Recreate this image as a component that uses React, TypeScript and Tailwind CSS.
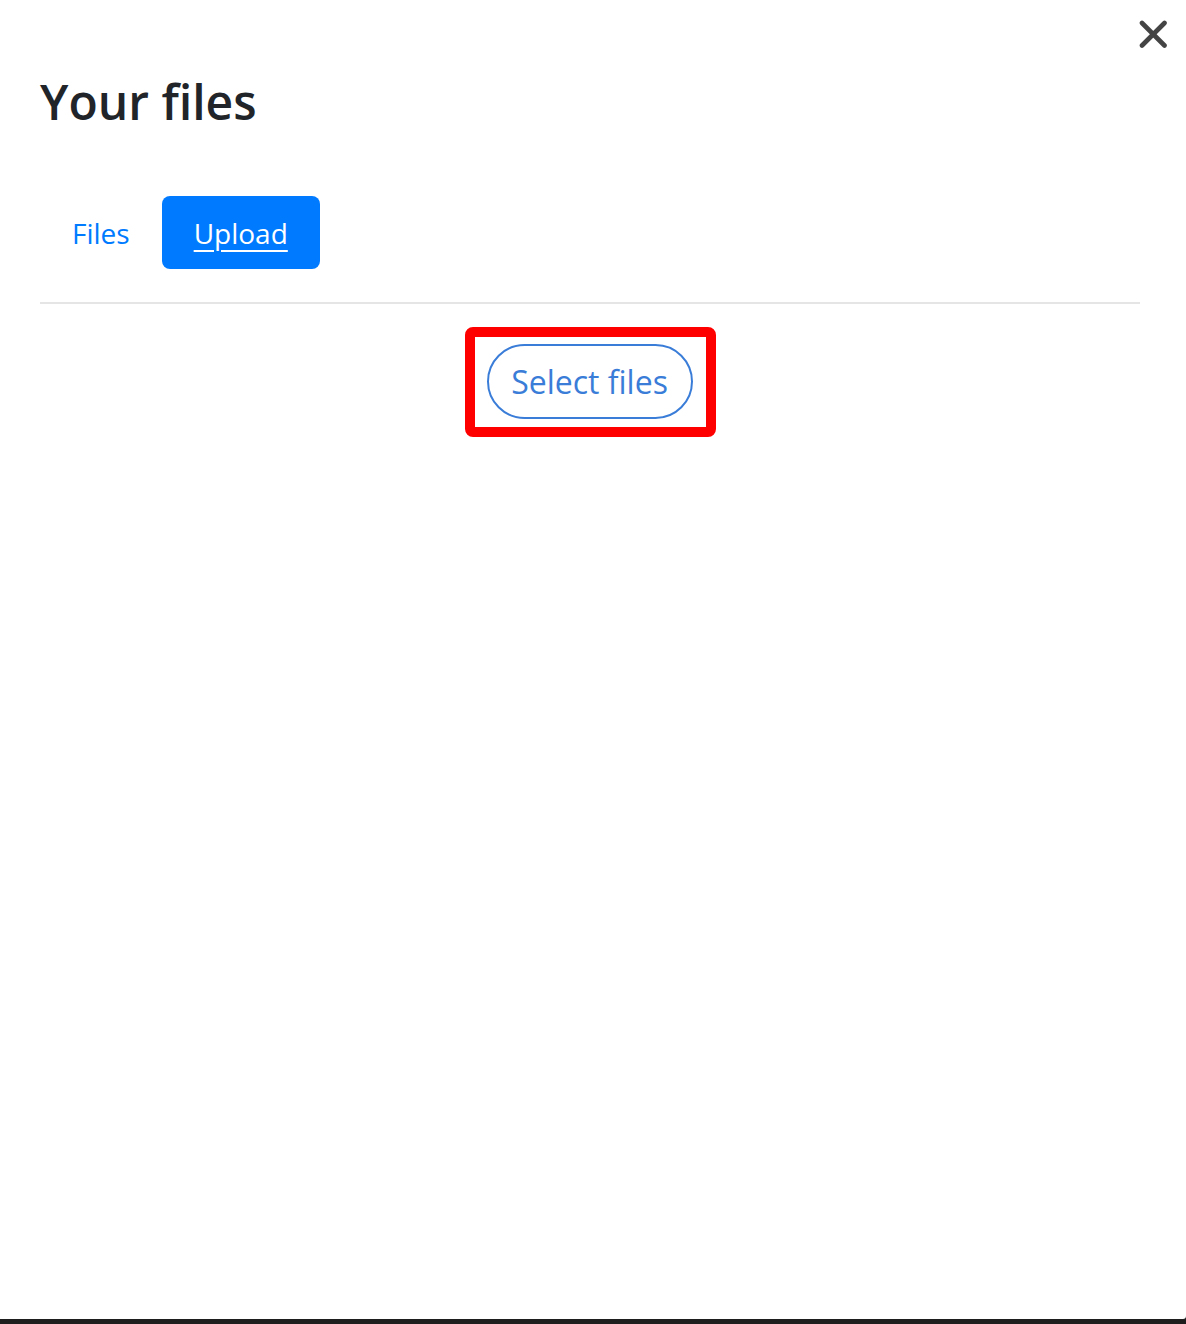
import React from "react";

export default function App() {
  return (
    <div className="h-[1324px] w-full bg-[#1e1e1e] font-['Open_Sans',sans-serif]">
      <div className="h-[1319px] bg-white pt-[20px] pl-[40px] pr-[19px] rounded-br-[3px]">
        <div className="flex items-start justify-between">
          <h1 className="mt-[52px] text-[48px] leading-[60px] font-semibold text-[#212529]">
            Your files
          </h1>
          <button className="w-[28px] h-[28px] flex items-center justify-center" aria-label="Close">
            <svg width="28" height="28" viewBox="0 0 28 28">
              <line x1="3" y1="3" x2="25.5" y2="25.5" stroke="#444444" strokeWidth="4.6" strokeLinecap="round" />
              <line x1="25.5" y1="3" x2="3" y2="25.5" stroke="#444444" strokeWidth="4.6" strokeLinecap="round" />
            </svg>
          </button>
        </div>
        <div className="mr-[27px]">
          <nav className="mt-[64px] flex">
            <a className="h-[73px] pl-[32px] pr-[32px] flex items-center text-[28px] text-[#007bff] rounded-[8px]">
              Files
            </a>
            <a className="h-[73px] pl-[32px] pr-[32px] flex items-center text-[28px] text-white bg-[#007bff] rounded-[8px] underline decoration-2 underline-offset-[6px]">
              Upload
            </a>
          </nav>
          <div className="mt-[33px] h-[2px] bg-[#e5e5e5]" />
          <div className="mt-[23px] flex justify-center">
            <div className="border-[10px] border-[#ff0000] rounded-[8px] pl-[12px] pr-[13px] pt-[7px] pb-[8px]">
              <button className="w-[206px] h-[75px] rounded-full border-2 border-[#3a7dd8] text-[#3a7dd8] text-[32px] flex items-center justify-center">
                Select files
              </button>
            </div>
          </div>
        </div>
      </div>
    </div>
  );
}
